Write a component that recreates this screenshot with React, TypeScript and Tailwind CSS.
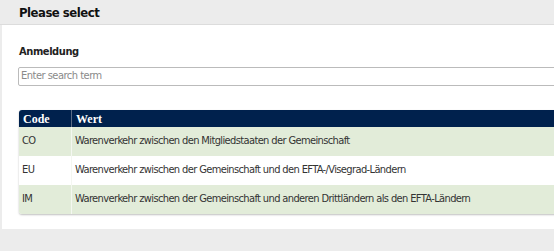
import React from "react";

const rows = [
  { code: "CO", wert: "Warenverkehr zwischen den Mitgliedstaaten der Gemeinschaft" },
  { code: "EU", wert: "Warenverkehr zwischen der Gemeinschaft und den EFTA-/Visegrad-Ländern" },
  { code: "IM", wert: "Warenverkehr zwischen der Gemeinschaft und anderen Drittländern als den EFTA-Ländern" },
];

export default function App() {
  const font = { fontFamily: "Tahoma, 'DejaVu Sans Condensed', sans-serif" };
  return (
    <div className="w-[554px] h-[251px] overflow-hidden flex flex-col bg-[#ececec]" style={font}>
      <div className="h-[25px] shrink-0 border-b border-[#dcdcdc] bg-[#ececec] pl-[19px] pt-[2px] flex items-center">
        <span className="text-[13px] font-bold text-[#111] tracking-[-0.5px]">Please select</span>
      </div>
      <div className="h-[204px] shrink-0 ml-[2px] bg-white pl-[16px] flex flex-col">
        <div className="pt-[20px] pl-[1px] text-[11px] font-bold text-[#222] tracking-[-0.4px] leading-[13px]">Anmeldung</div>
        <div className="mt-[9px] h-[19px] w-[560px] border border-[#bbbbbb] rounded-[2px] flex items-center pl-[2px]">
          <span className="text-[11px] text-[#8a8a8a] tracking-[-0.5px]">Enter search term</span>
        </div>
        <div className="mt-[24px] ml-[1px] w-[560px] rounded-[3px] overflow-hidden shadow-[0_1px_2px_rgba(0,0,0,0.25)]">
          <div className="flex h-[17px] bg-[#00214d] text-white text-[12px] font-bold" style={{ fontFamily: "'Liberation Serif', serif" }}>
            <div className="w-[53px] pl-[4px] flex items-center border-r border-[#5a6b85]">Code</div>
            <div className="flex-1 pl-[4px] flex items-center">Wert</div>
          </div>
          {rows.map((r, i) => (
            <div key={r.code} className={`flex h-[29px] text-[11px] text-[#333] tracking-[-0.62px] ${i % 2 === 0 ? "bg-[#e2ecd9]" : "bg-white"}`}>
              <div className="w-[53px] pl-[3px] flex items-center border-r border-[#f4f7f1]">{r.code}</div>
              <div className="flex-1 pl-[3px] flex items-center">{r.wert}</div>
            </div>
          ))}
        </div>
      </div>
      <div className="flex-1 bg-[#ececec]" />
    </div>
  );
}
